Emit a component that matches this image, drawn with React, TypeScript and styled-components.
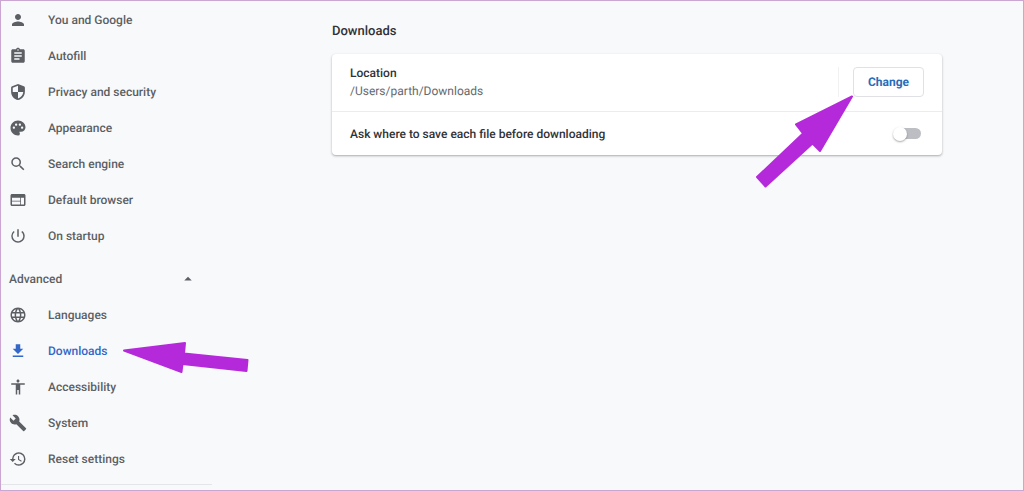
import React, { useState } from "react";
import styled, { createGlobalStyle } from "styled-components";
import {
  MdPerson,
  MdAssignment,
  MdPalette,
  MdSearch,
  MdWeb,
  MdPowerSettingsNew,
  MdLanguage,
  MdAccessibility,
  MdBuild,
  MdRestore,
  MdArrowDropUp,
} from "react-icons/md";

const GlobalStyle = createGlobalStyle`
  *, *::before, *::after { box-sizing: border-box; }
  body {
    margin: 0;
    background: #f8f9fb;
    color: #303236;
    font-family: Roboto, "Liberation Sans", sans-serif;
    font-size: 12px;
    text-rendering: geometricPrecision;
  }
`;

const Page = styled.div`
  position: relative;
  display: flex;
  min-height: 100vh;
  padding-top: 1px;
  border: 1px solid #cba6d3;
`;

const Sidebar = styled.nav`
  flex: 0 0 211px;
`;

const MenuList = styled.ul`
  margin: 0;
  padding: 0;
  list-style: none;
`;

const MenuLink = styled.a<{ $active?: boolean }>`
  display: flex;
  align-items: center;
  gap: 21px;
  height: 36px;
  padding-left: 8px;
  color: ${(p) => (p.$active ? "#3367c8" : "#5c5f63")};
  font-weight: 500;
  line-height: 16px;
  text-decoration: none;

  svg {
    flex: none;
    width: 18px;
    height: 18px;
  }
`;

const AdvancedToggle = styled.button`
  display: flex;
  align-items: center;
  justify-content: space-between;
  width: 100%;
  height: 36px;
  margin-top: 7px;
  padding: 0 15px 0 8px;
  border: 0;
  background: none;
  color: #5c5f63;
  font: inherit;
  font-weight: 500;
  text-rendering: inherit;

  svg {
    width: 18px;
    height: 18px;
  }
`;

const SidebarRule = styled.hr`
  height: 1px;
  margin: 7px 0 0;
  border: 0;
  background: #e4e5e9;
`;

const Main = styled.main`
  flex: 1;
  min-width: 0;
  padding: 20px 81px 20px 120px;
`;

const Heading = styled.h1`
  margin: 0 0 12px;
  font-size: 13px;
  font-weight: 500;
  line-height: 20px;
`;

const Card = styled.section`
  max-width: 610px;
  border-radius: 4px;
  background: #fff;
  box-shadow: 0 1px 2px rgba(60, 64, 67, 0.3), 0 1px 3px rgba(60, 64, 67, 0.15);
`;

const Row = styled.div<{ $tall?: boolean }>`
  display: flex;
  align-items: center;
  justify-content: space-between;
  min-height: ${(p) => (p.$tall ? 57 : 44)}px;
  padding: 0 18px ${(p) => (p.$tall ? 1 : 0)}px;

  & + & {
    border-top: 1px solid #ececee;
  }
`;

const Label = styled.label`
  font-weight: 500;
  line-height: 18px;
`;

const RowTitle = styled.div`
  font-weight: 500;
  line-height: 18px;
`;

const RowDetail = styled.div`
  color: #66696d;
  line-height: 18px;
`;

const Action = styled.div`
  padding-left: 14px;
  border-left: 1px solid #f1f1f3;
`;

const ChangeButton = styled.button`
  display: block;
  height: 30px;
  padding: 0 14px;
  border: 1px solid #dfe1e5;
  border-radius: 4px;
  background: #fff;
  color: #2a6cb8;
  font: inherit;
  font-weight: 700;
  text-rendering: inherit;
`;

const Switch = styled.input`
  appearance: none;
  display: flex;
  align-items: center;
  width: 26px;
  height: 11px;
  margin: 0 3px 0 0;
  border-radius: 6px;
  background: #bcbec4;

  &::before {
    content: "";
    flex: none;
    width: 14px;
    height: 14px;
    margin-left: -2px;
    border-radius: 50%;
    background: #fff;
    box-shadow: 0 1px 2px rgba(60, 64, 67, 0.45);
  }

  &:checked {
    justify-content: flex-end;
    background: #8ab4f8;
  }
`;

const Annotations = styled.svg`
  position: absolute;
  top: -1px;
  left: -1px;
  pointer-events: none;
  fill: #b42ada;
  stroke: #b42ada;
  stroke-width: 2;
  stroke-linejoin: round;
`;

const DownloadIcon = () => (
  <svg viewBox="0 0 24 24" fill="currentColor" aria-hidden="true">
    <path d="M19 9h-4V3H9v6H5l7 7 7-7zM5 18v2h14v-2H5z" />
  </svg>
);

const ShieldIcon = () => (
  <svg viewBox="0 0 24 24" fill="currentColor" aria-hidden="true">
    <path
      fillRule="evenodd"
      d="M12 1.200 L4.200 4.200 Q2.800 4.800 2.800 6.200 V11.500 C2.800 17 6.700 21.500 12 22.800 C17.300 21.500 21.200 17 21.200 11.500 V6.200 Q21.200 4.800 19.800 4.200 Z M12 3.500 V12 H19 C18.600 16.200 15.800 19.500 12 20.600 V12 H5 V6.200 Z"
    />
  </svg>
);

const basicItems = [
  { label: "You and Google", Icon: MdPerson },
  { label: "Autofill", Icon: MdAssignment },
  { label: "Privacy and security", Icon: ShieldIcon },
  { label: "Appearance", Icon: MdPalette },
  { label: "Search engine", Icon: MdSearch },
  { label: "Default browser", Icon: MdWeb },
  { label: "On startup", Icon: MdPowerSettingsNew },
];

const advancedItems = [
  { label: "Languages", Icon: MdLanguage },
  { label: "Downloads", Icon: DownloadIcon },
  { label: "Accessibility", Icon: MdAccessibility },
  { label: "System", Icon: MdBuild },
  { label: "Reset settings", Icon: MdRestore },
];

type Item = { label: string; Icon: React.ComponentType };

const Menu = ({ items, current }: { items: Item[]; current: string }) => (
  <MenuList>
    {items.map(({ label, Icon }) => (
      <li key={label}>
        <MenuLink
          href={"#" + label.toLowerCase().replace(/ /g, "-")}
          $active={label === current}
          aria-current={label === current ? "page" : undefined}
        >
          <Icon />
          {label}
        </MenuLink>
      </li>
    ))}
  </MenuList>
);

export default function App() {
  const [open, setOpen] = useState(true);
  const [ask, setAsk] = useState(false);

  return (
    <>
      <GlobalStyle />
      <Page>
        <Sidebar aria-label="Settings">
          <Menu items={basicItems} current="Downloads" />
          <AdvancedToggle type="button" aria-expanded={open} onClick={() => setOpen(!open)}>
            Advanced
            <MdArrowDropUp />
          </AdvancedToggle>
          {open && <Menu items={advancedItems} current="Downloads" />}
          <SidebarRule />
        </Sidebar>
        <Main>
          <Heading>Downloads</Heading>
          <Card>
            <Row $tall>
              <div>
                <RowTitle>Location</RowTitle>
                <RowDetail>/Users/parth/Downloads</RowDetail>
              </div>
              <Action>
                <ChangeButton type="button">Change</ChangeButton>
              </Action>
            </Row>
            <Row>
              <Label htmlFor="ask-location">Ask where to save each file before downloading</Label>
              <Switch
                id="ask-location"
                type="checkbox"
                role="switch"
                checked={ask}
                onChange={(e) => setAsk(e.target.checked)}
              />
            </Row>
          </Card>
        </Main>
        <Annotations width="1024" height="491" viewBox="0 0 1024 491" aria-hidden="true">
          <path d="M124 350.500 L185 343 L184 353.500 L247.500 360 L246.500 371 L182.500 364 L181.500 372 Z" />
          <path d="M852 96.500 L796 124.500 L803 133.500 L757 177 L765.500 186.500 L812.500 143.500 L820 151 Z" />
        </Annotations>
      </Page>
    </>
  );
}
